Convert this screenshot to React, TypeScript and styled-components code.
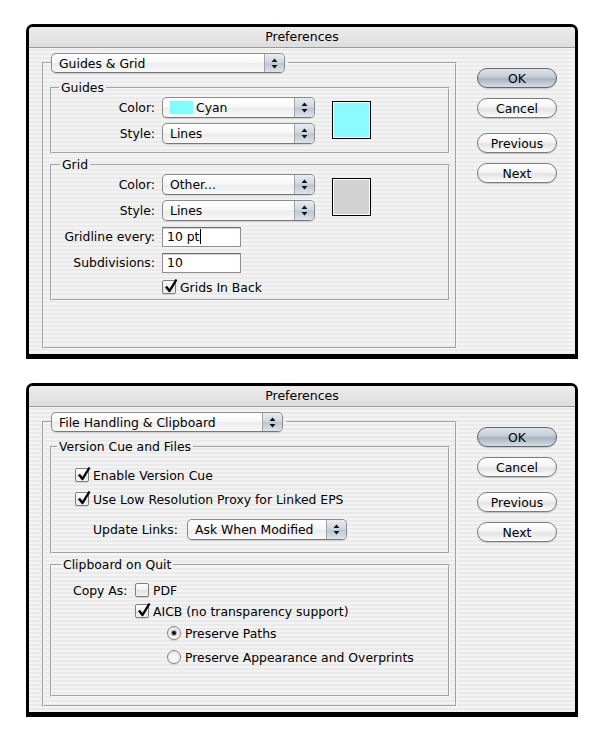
import React from "react";
import styled, { createGlobalStyle } from "styled-components";

const Global = createGlobalStyle`
  html, body { margin: 0; padding: 0; background: #fff; }
  body {
    font-family: "DejaVu Sans", "Liberation Sans", sans-serif;
    font-size: 12.4px;
    color: #000;
  }
`;

const Page = styled.div`
  width: 600px;
  height: 745px;
  box-sizing: border-box;
  padding: 24px 0 0 26px;
  display: flex;
  flex-direction: column;
  gap: 24px;
`;

const Window = styled.div`
  width: 552px;
  box-sizing: border-box;
  border: 3px solid #000;
  border-bottom-width: 5px;
  border-radius: 7px 7px 0 0;
  overflow: hidden;
  background: repeating-linear-gradient(to bottom, #f3f3f3 0 2px, #eaeaea 2px 4px);
`;

const TitleBar = styled.div`
  height: 20px;
  line-height: 20px;
  text-align: center;
  font-size: 12.5px;
  background: linear-gradient(#ececec, #dddddd);
  border-bottom: 1px solid #9a9a9a;
`;

const Body = styled.div`
  display: flex;
  align-items: flex-start;
  gap: 20px;
  padding: 5px 18px 5px 13px;
`;

const Group = styled.fieldset<{ $width: number }>`
  width: ${(p) => p.$width}px;
  box-sizing: border-box;
  margin: 0;
  padding: 0;
  min-width: 0;
  border: 2px groove #f6f6f6;
`;

const Legend = styled.legend<{ $indent: number }>`
  margin-left: ${(p) => p.$indent}px;
  padding: 0 2px;
  line-height: 16px;
`;

const PopupLegend = styled.legend`
  margin-left: 7px;
  padding: 0 3px 0 0;
`;

const OuterContent = styled.div<{ $pb: number }>`
  padding: 7px 5px ${(p) => p.$pb}px 6px;
  display: flex;
  flex-direction: column;
  gap: 3px;
`;

const FieldGrid = styled.div<{ $pt: number; $pb: number }>`
  display: grid;
  grid-template-columns: 103px 153px 49px;
  grid-auto-rows: 21px;
  column-gap: 7px;
  row-gap: 5px;
  align-items: center;
  padding: ${(p) => p.$pt}px 0 ${(p) => p.$pb}px;
`;

const FieldLabel = styled.div`
  grid-column: 1;
  text-align: right;
  white-space: nowrap;
`;

const Swatch = styled.div<{ $color: string }>`
  grid-column: 3;
  grid-row: 1 / span 2;
  align-self: start;
  margin: 4px 0 0 10px;
  width: 39px;
  height: 38px;
  box-sizing: border-box;
  border: 1px solid #000;
  box-shadow: inset 0 0 0 1px #fff;
  background: ${(p) => p.$color};
`;

const Popup = styled.div<{ $w: number; $h: number }>`
  grid-column: 2;
  width: ${(p) => p.$w}px;
  height: ${(p) => p.$h}px;
  box-sizing: border-box;
  display: flex;
  border: 1px solid #8c8c8c;
  border-bottom-color: #777;
  border-radius: 5px;
  overflow: hidden;
  background: linear-gradient(#ffffff 0%, #f7f7f7 48%, #ececec 52%, #f8f8f8 100%);
  box-shadow: 0 1px 1px rgba(0, 0, 0, 0.12);
`;

const PopupText = styled.div`
  flex: 1;
  display: flex;
  align-items: center;
  gap: 3px;
  padding-left: 7px;
  white-space: nowrap;
`;

const ColorChip = styled.span`
  width: 23px;
  height: 13px;
  background: #80fcff;
`;

const Stepper = styled.div`
  width: 19px;
  border-left: 1px solid #a3a3a3;
  display: flex;
  align-items: center;
  justify-content: center;
  background: linear-gradient(#e8ecf2 0%, #cfd6e0 48%, #bcc5d2 52%, #dde3ec 100%);
`;

const TextField = styled.div`
  grid-column: 2;
  width: 79px;
  height: 20px;
  box-sizing: border-box;
  display: flex;
  align-items: center;
  padding-left: 4px;
  background: #fff;
  border: 1px solid #8f8f8f;
  border-top-color: #6c6c6c;
  box-shadow: inset 0 1px 1px rgba(0, 0, 0, 0.18);
`;

const Caret = styled.span`
  width: 1px;
  height: 15px;
  background: #000;
  margin-left: 1px;
`;

const CheckCell = styled.div`
  grid-column: 2 / span 2;
  align-self: start;
`;

const Item = styled.label`
  display: inline-flex;
  align-items: center;
  gap: 4px;
  height: 18px;
  white-space: nowrap;
`;

const Box = styled.span`
  position: relative;
  width: 14px;
  height: 14px;
  box-sizing: border-box;
  border: 1px solid #7e7e7e;
  border-radius: 2px;
  background: linear-gradient(#ffffff, #f0f0f0 50%, #e1e1e1 51%, #f4f4f4);
  box-shadow: 0 1px 1px rgba(0, 0, 0, 0.12);
`;

const Tick = styled.svg`
  position: absolute;
  left: 1px;
  top: -3px;
  overflow: visible;
`;

const Round = styled.span`
  width: 14px;
  height: 14px;
  box-sizing: border-box;
  border: 1px solid #858585;
  border-radius: 50%;
  display: flex;
  align-items: center;
  justify-content: center;
  background: radial-gradient(circle at 50% 70%, #ffffff 0%, #f1f1f1 50%, #d8d8d8 100%);
  box-shadow: 0 1px 1px rgba(0, 0, 0, 0.12);
`;

const Dot = styled.span`
  width: 4px;
  height: 4px;
  border-radius: 50%;
  background: #111;
  box-shadow: 0 0 1px 1px rgba(0, 0, 0, 0.35);
`;

const Stack = styled.div<{ $pt: number; $pb: number }>`
  display: flex;
  flex-direction: column;
  align-items: flex-start;
  padding: ${(p) => p.$pt}px 0 ${(p) => p.$pb}px;
`;

const Row = styled.div<{ $indent: number; $top: number }>`
  display: flex;
  align-items: center;
  padding-left: ${(p) => p.$indent}px;
  margin-top: ${(p) => p.$top}px;
`;

const RowLabel = styled.span<{ $w: number }>`
  width: ${(p) => p.$w}px;
  white-space: nowrap;
`;

const ButtonColumn = styled.div`
  display: flex;
  flex-direction: column;
  margin-top: 15px;
`;

const PushButton = styled.div<{ $primary?: boolean; $gap: number }>`
  width: 80px;
  height: 20px;
  box-sizing: border-box;
  margin-top: ${(p) => p.$gap}px;
  display: flex;
  align-items: center;
  justify-content: center;
  border-radius: 10px;
  border: 1px solid ${(p) => (p.$primary ? "#5e6670" : "#7c7c7c")};
  box-shadow: 0 1px 1px rgba(0, 0, 0, 0.18);
  background: ${(p) =>
    p.$primary
      ? "linear-gradient(#dfe4ea 0%, #c3cbd5 45%, #a9b3c0 55%, #d7dde5 100%)"
      : "linear-gradient(#ffffff 0%, #f4f4f4 45%, #e3e3e3 55%, #fcfcfc 100%)"};
`;

function Arrows() {
  return (
    <svg width="7" height="11" viewBox="0 0 7 11">
      <path d="M3.5 0.5 L6.5 4 L0.5 4 Z" fill="#111" />
      <path d="M0.5 7 L6.5 7 L3.5 10.5 Z" fill="#111" />
    </svg>
  );
}

function PopupMenu({ w, h = 21, children }: { w: number; h?: number; children: React.ReactNode }) {
  return (
    <Popup $w={w} $h={h}>
      <PopupText>{children}</PopupText>
      <Stepper>
        <Arrows />
      </Stepper>
    </Popup>
  );
}

function CheckBox({ label, checked = true }: { label: string; checked?: boolean }) {
  return (
    <Item>
      <Box>
        {checked && (
          <Tick width="14" height="16" viewBox="0 0 14 16">
            <path d="M2 8.5 L5.5 13 L12.5 1.5" fill="none" stroke="#000" strokeWidth="2.4" strokeLinejoin="round" />
          </Tick>
        )}
      </Box>
      {label}
    </Item>
  );
}

function Radio({ label, on = false }: { label: string; on?: boolean }) {
  return (
    <Item>
      <Round>{on && <Dot />}</Round>
      {label}
    </Item>
  );
}

function Buttons() {
  return (
    <ButtonColumn>
      <PushButton $primary $gap={0}>OK</PushButton>
      <PushButton $gap={10}>Cancel</PushButton>
      <PushButton $gap={15}>Previous</PushButton>
      <PushButton $gap={10}>Next</PushButton>
    </ButtonColumn>
  );
}

export default function App() {
  return (
    <>
      <Global />
      <Page>
        <Window>
          <TitleBar>Preferences</TitleBar>
          <Body>
            <Group $width={415}>
              <PopupLegend>
                <PopupMenu w={234} h={20}>Guides &amp; Grid</PopupMenu>
              </PopupLegend>
              <OuterContent $pb={46}>
                <Group $width={400}>
                  <Legend $indent={7}>Guides</Legend>
                  <FieldGrid $pt={1} $pb={8}>
                    <FieldLabel>Color:</FieldLabel>
                    <PopupMenu w={153}>
                      <ColorChip />
                      Cyan
                    </PopupMenu>
                    <Swatch $color="#8bfbff" />
                    <FieldLabel>Style:</FieldLabel>
                    <PopupMenu w={153}>Lines</PopupMenu>
                  </FieldGrid>
                </Group>
                <Group $width={400}>
                  <Legend $indent={8}>Grid</Legend>
                  <FieldGrid $pt={1} $pb={0}>
                    <FieldLabel>Color:</FieldLabel>
                    <PopupMenu w={153}>Other...</PopupMenu>
                    <Swatch $color="#d3d3d3" />
                    <FieldLabel>Style:</FieldLabel>
                    <PopupMenu w={153}>Lines</PopupMenu>
                    <FieldLabel>Gridline every:</FieldLabel>
                    <TextField>
                      10 pt
                      <Caret />
                    </TextField>
                    <FieldLabel>Subdivisions:</FieldLabel>
                    <TextField>10</TextField>
                    <CheckCell>
                      <CheckBox label="Grids In Back" />
                    </CheckCell>
                  </FieldGrid>
                </Group>
              </OuterContent>
            </Group>
            <Buttons />
          </Body>
        </Window>

        <Window>
          <TitleBar>Preferences</TitleBar>
          <Body>
            <Group $width={415}>
              <PopupLegend>
                <PopupMenu w={232} h={20}>File Handling &amp; Clipboard</PopupMenu>
              </PopupLegend>
              <OuterContent $pb={8}>
                <Group $width={400}>
                  <Legend $indent={5}>Version Cue and Files</Legend>
                  <Stack $pt={11} $pb={12}>
                    <Row $indent={23} $top={0}>
                      <CheckBox label="Enable Version Cue" />
                    </Row>
                    <Row $indent={23} $top={6}>
                      <CheckBox label="Use Low Resolution Proxy for Linked EPS" />
                    </Row>
                    <Row $indent={41} $top={11}>
                      <RowLabel $w={94}>Update Links:</RowLabel>
                      <PopupMenu w={160} h={21}>Ask When Modified</PopupMenu>
                    </Row>
                  </Stack>
                </Group>
                <Group $width={400}>
                  <Legend $indent={9}>Clipboard on Quit</Legend>
                  <Stack $pt={8} $pb={29}>
                    <Row $indent={21} $top={0}>
                      <RowLabel $w={62}>Copy As:</RowLabel>
                      <CheckBox label="PDF" checked={false} />
                    </Row>
                    <Row $indent={83} $top={3}>
                      <CheckBox label="AICB (no transparency support)" />
                    </Row>
                    <Row $indent={115} $top={4}>
                      <Radio label="Preserve Paths" on />
                    </Row>
                    <Row $indent={115} $top={6}>
                      <Radio label="Preserve Appearance and Overprints" />
                    </Row>
                  </Stack>
                </Group>
              </OuterContent>
            </Group>
            <Buttons />
          </Body>
        </Window>
      </Page>
    </>
  );
}
